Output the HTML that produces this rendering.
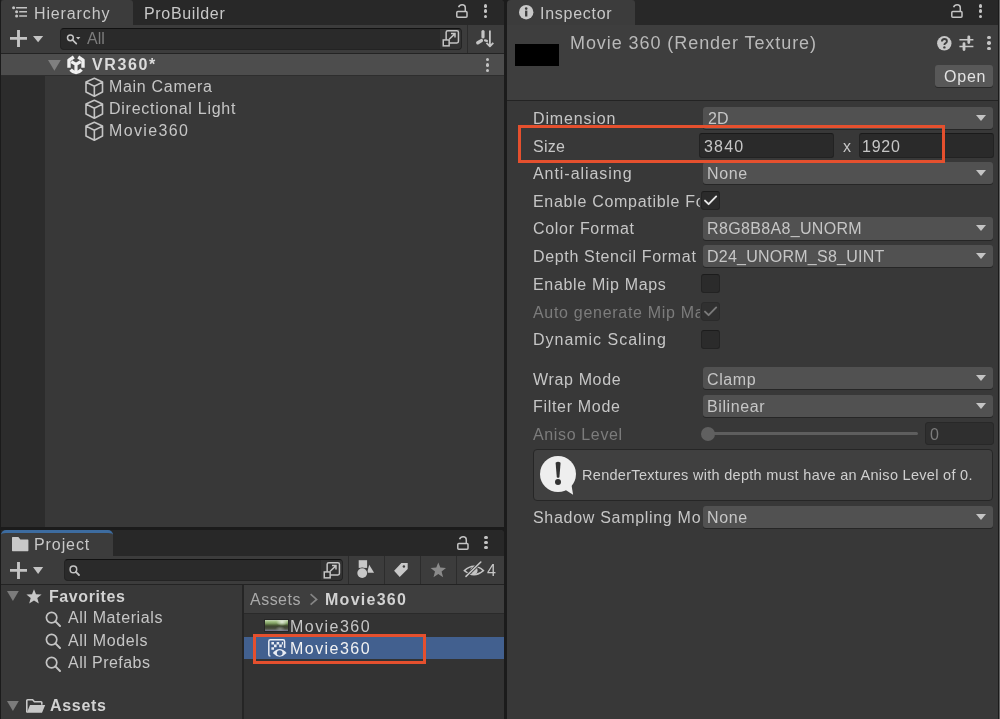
<!DOCTYPE html>
<html><head><meta charset="utf-8">
<style>
*{margin:0;padding:0;box-sizing:border-box}
html,body{width:1000px;height:719px;overflow:hidden;background:#1b1b1b;font-family:"Liberation Sans",sans-serif;-webkit-font-smoothing:antialiased}
.a{position:absolute}
.t{position:absolute;will-change:transform;margin-top:0.7px;white-space:nowrap;font-size:16px;line-height:20px;color:#c6c6c6;letter-spacing:0.7px}
.b{font-weight:700}
.dd{position:absolute;background:#515151;border-radius:3px;box-shadow:0 1px 0 #262626}
.tf{position:absolute;background:#2a2a2a;border-radius:3px;border:1px solid #222;border-top-color:#1a1a1a}
.cb{position:absolute;width:19px;height:19px;background:#2b2b2b;border-radius:3px;border:1px solid #232323;border-top-color:#1c1c1c}
.arr{position:absolute;width:0;height:0;border-left:5.5px solid transparent;border-right:5.5px solid transparent;border-top:6.5px solid #c4c4c4}
.dot{position:absolute;width:3.6px;height:3.6px;border-radius:50%;background:#c4c4c4}
svg{position:absolute;overflow:visible}
</style></head><body>

<!-- ============ HIERARCHY ============ -->
<div class="a" style="left:1px;top:0;width:503px;height:527px;background:#383838;border-top-right-radius:4px;overflow:hidden">
  <div class="a" style="left:0;top:0;width:503px;height:24.5px;background:#282828"></div>
  <div class="a" style="left:0;top:0;width:132.3px;height:24.5px;background:#3c3c3c;border-top-left-radius:3px;border-top-right-radius:3px"></div>
  <div class="a" style="left:0;top:24.5px;width:503px;height:28.5px;background:#3c3c3c"></div>
  <div class="a" style="left:0;top:53px;width:503px;height:1px;background:#232323"></div>
  <div class="a" style="left:466px;top:24.5px;width:1px;height:28.5px;background:#2c2c2c"></div>
  <div class="a" style="left:0;top:54px;width:503px;height:21px;background:#4d4d4d"></div>
  <div class="a" style="left:0;top:75px;width:503px;height:1px;background:#2e2e2e"></div>
  <div class="a" style="left:0;top:76px;width:44px;height:451px;background:#2c2c2c"></div>
</div>

<!-- ============ PROJECT ============ -->
<div class="a" style="left:1px;top:530px;width:503px;height:189px;background:#383838;border-top-right-radius:4px;overflow:hidden">
  <div class="a" style="left:0;top:0;width:503px;height:25.5px;background:#282828"></div>
  <div class="a" style="left:0;top:0;width:112.4px;height:25.5px;background:#3c3c3c;border-top-left-radius:5px;border-top-right-radius:5px;border-top:3px solid #3d6ca0"></div>
  <div class="a" style="left:0;top:25.5px;width:503px;height:28px;background:#3c3c3c"></div>
  <div class="a" style="left:0;top:53.5px;width:503px;height:1px;background:#232323"></div>
  <div class="a" style="left:241px;top:54.5px;width:1.6px;height:140px;background:#252525"></div>
  <div class="a" style="left:242.6px;top:54.5px;width:261px;height:28.5px;background:#3e3e3e"></div>
  <div class="a" style="left:242.6px;top:83px;width:261px;height:1px;background:#2a2a2a"></div>
  <div class="a" style="left:242.6px;top:84px;width:261px;height:110px;background:#333333"></div>
  <div class="a" style="left:242.6px;top:107px;width:261px;height:22px;background:#42608f"></div>
  <div class="a" style="left:347px;top:25.5px;width:1px;height:28px;background:#2c2c2c"></div>
  <div class="a" style="left:383px;top:25.5px;width:1px;height:28px;background:#2c2c2c"></div>
  <div class="a" style="left:419px;top:25.5px;width:1px;height:28px;background:#2c2c2c"></div>
  <div class="a" style="left:455px;top:25.5px;width:1px;height:28px;background:#2c2c2c"></div>
</div>

<!-- ============ INSPECTOR ============ -->
<div class="a" style="left:998.6px;top:0;width:1.4px;height:719px;background:#626262"></div>
<div class="a" style="left:507px;top:0;width:490.6px;height:719px;background:#383838;border-top-left-radius:4px;overflow:hidden">
  <div class="a" style="left:0;top:0;width:491px;height:24.5px;background:#282828"></div>
  <div class="a" style="left:0;top:0;width:128.3px;height:24.5px;background:#3c3c3c;border-top-left-radius:3px;border-top-right-radius:3px"></div>
  <div class="a" style="left:0;top:24.5px;width:491px;height:75.5px;background:#3e3e3e"></div>
  <div class="a" style="left:0;top:100px;width:491px;height:1px;background:#232323"></div>
</div>


<svg style="left:11px;top:5px" width="17" height="13" viewBox="0 0 17 13"><circle cx="2.6" cy="2.7" r="1.5" fill="#c4c4c4"/><circle cx="5.6" cy="6.8" r="1.5" fill="#c4c4c4"/><circle cx="5.6" cy="11" r="1.5" fill="#c4c4c4"/><path d="M5.1 2.7 H16 M8.2 6.8 H16 M8.2 11 H16" stroke="#c4c4c4" stroke-width="1.5"/></svg>
<div class="t" style="left:33.8px;top:3.4px;letter-spacing:0.87px;color:#c8c8c8">Hierarchy</div>
<div class="t" style="left:144.2px;top:3.4px;letter-spacing:0.67px;color:#c8c8c8">ProBuilder</div>
<svg style="left:456.3px;top:4px" width="12" height="14" viewBox="0 0 12 14"><rect x="0.8" y="7.6" width="10.2" height="5.6" rx="1" fill="none" stroke="#c4c4c4" stroke-width="1.5"/><path d="M2.6 3.2 Q3.6 0.8 6.1 0.8 Q9.3 0.8 9.3 3.8 V7.6" fill="none" stroke="#c4c4c4" stroke-width="1.5"/></svg>
<div class="dot" style="left:483.9px;top:4.0px;width:3.6px;height:3.6px"></div><div class="dot" style="left:483.9px;top:9.3px;width:3.6px;height:3.6px"></div><div class="dot" style="left:483.9px;top:14.6px;width:3.6px;height:3.6px"></div>
<svg style="left:10px;top:30.2px" width="17" height="17" viewBox="0 0 17 17"><path d="M0 8.4 H17 M8.5 0 V17" stroke="#c4c4c4" stroke-width="2.9"/></svg>
<svg style="left:33px;top:35.9px" width="10.2" height="6.2" viewBox="0 0 10.2 6.2"><path d="M0 0 H10.2 L5.1 6.2 Z" fill="#c4c4c4"/></svg>
<div class="a" style="left:60px;top:28px;width:402px;height:21.5px;background:#2a2a2a;border-radius:4px;border:1px solid #232323;border-top-color:#111111"></div>
<div class="a" style="left:439.6px;top:29px;width:21.4px;height:19.5px;background:#323232;border-radius:0 3px 3px 0"></div>
<svg style="left:66px;top:32px" width="16" height="14" viewBox="0 0 16 14"><circle cx="4.4" cy="5.8" r="2.9" fill="none" stroke="#c4c4c4" stroke-width="1.5"/><path d="M6.5 7.9 L10.3 11.6" stroke="#c4c4c4" stroke-width="1.7" stroke-linecap="round"/><path d="M10 5 H14.4 L12.2 7.6 Z" fill="#c4c4c4"/></svg>
<div class="t" style="left:87px;top:28.6px;letter-spacing:0px;color:#7d7d7d">All</div>
<svg style="left:441.9px;top:29.3px" width="18" height="17" viewBox="0 0 18 17"><rect x="4.15" y="1.75" width="12.3" height="12.2" rx="1.6" fill="none" stroke="#c4c4c4" stroke-width="1.5"/><rect x="1.25" y="10.95" width="5.9" height="5.9" fill="#2e2e2e" stroke="#c4c4c4" stroke-width="1.5"/><path d="M7.2 10.2 L13 4.6 M9 4.6 H13 V8.6" fill="none" stroke="#c4c4c4" stroke-width="1.5"/></svg>
<svg style="left:474px;top:28px" width="22" height="20" viewBox="0 0 22 20"><path d="M9 3.6 V9" stroke="#c4c4c4" stroke-width="3.2" stroke-linecap="round"/><path d="M3.8 14.8 L7.4 12.6" stroke="#c4c4c4" stroke-width="3.4" stroke-linecap="round"/><path d="M11 12.4 L12.9 12.9" stroke="#c4c4c4" stroke-width="2.2" stroke-linecap="round"/><path d="M15.9 2.6 V18 M12.5 14.8 L15.9 18.4 L19.3 14.8" fill="none" stroke="#c4c4c4" stroke-width="1.8" stroke-linejoin="round"/></svg>
<svg style="left:47.6px;top:60px" width="12.8" height="10.8" viewBox="0 0 12.8 10.8"><path d="M0 0 H12.8 L6.4 10.8 Z" fill="#808080"/></svg>
<svg style="left:66.5px;top:55px" width="18" height="20" viewBox="0 0 18 20"><path d="M2 12.8 V5.2 L6.8 2 M11.2 2 L16 5.2 V12.8" fill="none" stroke="#f0f0f0" stroke-width="3.4" stroke-linejoin="round"/><path d="M4.3 6.7 L9 9.4 L13.7 6.7 M9 9.4 V16" fill="none" stroke="#f0f0f0" stroke-width="3.2"/><path d="M3.6 14.6 Q9 20.6 14.6 14.6" fill="none" stroke="#f0f0f0" stroke-width="3.4"/></svg>
<div class="t b" style="left:91.5px;top:54.4px;letter-spacing:1.62px;color:#dcdcdc">VR360*</div>
<div class="dot" style="left:485.5px;top:57.7px;width:3.2px;height:3.2px"></div><div class="dot" style="left:485.5px;top:63.4px;width:3.2px;height:3.2px"></div><div class="dot" style="left:485.5px;top:69.1px;width:3.2px;height:3.2px"></div>
<svg style="left:82px;top:75.0px" width="24" height="24" viewBox="0 0 24 24"><path d="M12.35 3.3 L20.5 7.1 V17 L12.35 21.2 L4 17 V7.1 Z M4 7.1 L12.35 11.3 L20.5 7.1 M12.35 11.3 V21.2" fill="none" stroke="#c4c4c4" stroke-width="1.6" stroke-linejoin="round"/></svg>
<div class="t" style="left:108.75px;top:76.80px;letter-spacing:0.69px">Main Camera</div>
<svg style="left:82px;top:96.95px" width="24" height="24" viewBox="0 0 24 24"><path d="M12.35 3.3 L20.5 7.1 V17 L12.35 21.2 L4 17 V7.1 Z M4 7.1 L12.35 11.3 L20.5 7.1 M12.35 11.3 V21.2" fill="none" stroke="#c4c4c4" stroke-width="1.6" stroke-linejoin="round"/></svg>
<div class="t" style="left:108.75px;top:98.75px;letter-spacing:0.73px">Directional Light</div>
<svg style="left:82px;top:118.9px" width="24" height="24" viewBox="0 0 24 24"><path d="M12.35 3.3 L20.5 7.1 V17 L12.35 21.2 L4 17 V7.1 Z M4 7.1 L12.35 11.3 L20.5 7.1 M12.35 11.3 V21.2" fill="none" stroke="#c4c4c4" stroke-width="1.6" stroke-linejoin="round"/></svg>
<div class="t" style="left:108.75px;top:120.70px;letter-spacing:1.36px">Movie360</div>
<svg style="left:12px;top:536.6px" width="17" height="15" viewBox="0 0 17 15"><path d="M0 0.6 Q0 0 0.6 0 H6.4 L8.4 2.6 H15.8 Q16.4 2.6 16.4 3.2 V13.6 Q16.4 14.2 15.8 14.2 H0.6 Q0 14.2 0 13.6 Z" fill="#c8c8c8"/></svg>
<div class="t" style="left:33.6px;top:534.7px;letter-spacing:0.91px;color:#c8c8c8">Project</div>
<svg style="left:456.8px;top:535.6px" width="12" height="14" viewBox="0 0 12 14"><rect x="0.8" y="7.6" width="10.2" height="5.6" rx="1" fill="none" stroke="#c4c4c4" stroke-width="1.5"/><path d="M2.6 3.2 Q3.6 0.8 6.1 0.8 Q9.3 0.8 9.3 3.8 V7.6" fill="none" stroke="#c4c4c4" stroke-width="1.5"/></svg>
<div class="dot" style="left:484.3px;top:535.7px;width:3.4px;height:3.4px"></div><div class="dot" style="left:484.3px;top:540.9px;width:3.4px;height:3.4px"></div><div class="dot" style="left:484.3px;top:545.9px;width:3.4px;height:3.4px"></div>
<svg style="left:10.2px;top:561.6px" width="17" height="17" viewBox="0 0 17 17"><path d="M0 8.4 H17 M8.5 0 V17" stroke="#c4c4c4" stroke-width="2.9"/></svg>
<svg style="left:33px;top:566.8px" width="10.2" height="7" viewBox="0 0 10.2 7"><path d="M0 0 H10.2 L5.1 7 Z" fill="#c4c4c4"/></svg>
<div class="a" style="left:63.6px;top:559px;width:279.4px;height:21.8px;background:#2a2a2a;border-radius:4px;border:1px solid #232323;border-top-color:#111111"></div>
<div class="a" style="left:321px;top:560px;width:21px;height:19.8px;background:#323232;border-radius:0 3px 3px 0"></div>
<svg style="left:69px;top:565.4px" width="12" height="11" viewBox="0 0 12 11"><circle cx="4.4" cy="4.4" r="3.3" fill="none" stroke="#c4c4c4" stroke-width="1.5"/><path d="M6.8 6.8 L10 10" stroke="#c4c4c4" stroke-width="1.8" stroke-linecap="round"/></svg>
<svg style="left:322.8px;top:560.6px" width="18" height="17" viewBox="0 0 18 17"><rect x="4.15" y="1.75" width="12.3" height="12.2" rx="1.6" fill="none" stroke="#c4c4c4" stroke-width="1.5"/><rect x="1.25" y="10.95" width="5.9" height="5.9" fill="#2e2e2e" stroke="#c4c4c4" stroke-width="1.5"/><path d="M7.2 10.2 L13 4.6 M9 4.6 H13 V8.6" fill="none" stroke="#c4c4c4" stroke-width="1.5"/></svg>
<svg style="left:356px;top:559px" width="20" height="21" viewBox="0 0 20 21"><rect x="2.7" y="1.2" width="8.4" height="7.7" fill="#c8c8c8"/><path d="M13.2 5.7 L18.1 13.8 H11.1 Z" fill="#c8c8c8"/><circle cx="6.2" cy="14.1" r="5.6" fill="#3c3c3c"/><circle cx="6.2" cy="14.1" r="4.9" fill="#c8c8c8"/></svg>
<svg style="left:393px;top:562px" width="16" height="16" viewBox="0 0 16 16"><path d="M1.1 8.7 L8.4 1 H14.7 V7 L6.7 14.9 Z" fill="#c8c8c8"/><circle cx="10.9" cy="4.5" r="1.2" fill="#3c3c3c"/></svg>
<svg style="left:429.6px;top:561.6px" width="17" height="16" viewBox="0 0 17 16"><path d="M8.3 0.4 L10.3 5.6 L16 5.9 L11.6 9.5 L13.1 15.2 L8.3 12 L3.5 15.2 L5 9.5 L0.6 5.9 L6.3 5.6 Z" fill="#8a8a8a"/></svg>
<svg style="left:463px;top:561px" width="22" height="17" viewBox="0 0 22 17"><path d="M1.4 9.6 Q11 0.8 20.4 9.6 Q11 17.6 1.4 9.6 Z" fill="none" stroke="#c4c4c4" stroke-width="1.5"/><circle cx="11" cy="9.4" r="3.6" fill="#c4c4c4"/><path d="M3 15.4 L17.8 1" stroke="#3c3c3c" stroke-width="3.2"/><path d="M3 15.4 L17.8 1" stroke="#c4c4c4" stroke-width="1.6" stroke-linecap="round"/></svg>
<div class="t" style="left:487px;top:560.8px;letter-spacing:0px">4</div>
<svg style="left:7px;top:591.2px" width="11.8" height="10" viewBox="0 0 11.8 10"><path d="M0 0 H11.8 L5.9 10 Z" fill="#7c7c7c"/></svg>
<svg style="left:26px;top:588.5px" width="16" height="15" viewBox="0 0 16 15"><path d="M8 0.3 L10 5.3 L15.6 5.6 L11.3 9.1 L12.8 14.6 L8 11.5 L3.2 14.6 L4.7 9.1 L0.4 5.6 L6 5.3 Z" fill="#c8c8c8"/></svg>
<div class="t b" style="left:48.5px;top:586px;letter-spacing:0.59px;color:#d2d2d2">Favorites</div>
<svg style="left:45px;top:611.0px" width="17" height="16" viewBox="0 0 17 16"><circle cx="6.6" cy="6.6" r="5.2" fill="none" stroke="#c4c4c4" stroke-width="1.7"/><path d="M10.4 10.4 L15 15" stroke="#c4c4c4" stroke-width="2" stroke-linecap="round"/></svg>
<div class="t" style="left:68px;top:607.70px;letter-spacing:0.61px">All Materials</div>
<svg style="left:45px;top:633.25px" width="17" height="16" viewBox="0 0 17 16"><circle cx="6.6" cy="6.6" r="5.2" fill="none" stroke="#c4c4c4" stroke-width="1.7"/><path d="M10.4 10.4 L15 15" stroke="#c4c4c4" stroke-width="2" stroke-linecap="round"/></svg>
<div class="t" style="left:68px;top:629.95px;letter-spacing:0.63px">All Models</div>
<svg style="left:45px;top:655.5px" width="17" height="16" viewBox="0 0 17 16"><circle cx="6.6" cy="6.6" r="5.2" fill="none" stroke="#c4c4c4" stroke-width="1.7"/><path d="M10.4 10.4 L15 15" stroke="#c4c4c4" stroke-width="2" stroke-linecap="round"/></svg>
<div class="t" style="left:68px;top:652.20px;letter-spacing:0.46px">All Prefabs</div>
<svg style="left:7px;top:701px" width="11.8" height="10" viewBox="0 0 11.8 10"><path d="M0 0 H11.8 L5.9 10 Z" fill="#7c7c7c"/></svg>
<svg style="left:25.5px;top:698.5px" width="20" height="15" viewBox="0 0 20 15"><path d="M0.8 13.6 V1.6 Q0.8 0.8 1.6 0.8 H6.6 L8.4 2.8 H15 Q15.8 2.8 15.8 3.6 V5.8" fill="none" stroke="#c8c8c8" stroke-width="1.6"/><path d="M0.8 13.8 L4 6 H19.2 L16 13.8 Z" fill="#c8c8c8"/></svg>
<div class="t b" style="left:50px;top:695.2px;letter-spacing:0.68px;color:#d2d2d2">Assets</div>
<div class="t" style="left:249.6px;top:589.1px;letter-spacing:0.48px;color:#a9a9a9">Assets</div>
<svg style="left:309px;top:593px" width="10" height="13" viewBox="0 0 10 13"><path d="M1.6 1.2 L7.6 6.4 L1.6 11.6" fill="none" stroke="#858585" stroke-width="1.7"/></svg>
<div class="t b" style="left:325px;top:589.1px;letter-spacing:1.27px;color:#d2d2d2">Movie360</div>
<div class="a" style="left:264.3px;top:619px;width:24.4px;height:12.8px;background:#262626"></div><div class="a" style="left:265.1px;top:619.8px;width:22.8px;height:11.1px;background:radial-gradient(ellipse 6px 4px at 74% 18%,rgba(235,240,230,0.85),rgba(235,240,230,0) 100%),radial-gradient(ellipse 5px 3px at 66% 82%,rgba(150,155,150,0.7),rgba(150,155,150,0) 100%),linear-gradient(180deg,#c9dbbd 0%,#a3c185 14%,#7f9f62 30%,#4a5a35 48%,#3b4230 62%,#4b5040 78%,#6b6e70 92%,#72709a 100%)"></div>
<div class="t" style="left:290px;top:616.3px;letter-spacing:1.45px">Movie360</div>
<svg style="left:267.6px;top:639px" width="20" height="19" viewBox="0 0 20 19"><path d="M2.4 17 Q0.8 17 0.8 15.4 V2.4 Q0.8 0.8 2.4 0.8 H15 Q16.6 0.8 16.6 2.4 V9" fill="none" stroke="#e8ecf3" stroke-width="1.5"/><path d="M3.4 3 H6 V5.6 H3.4 Z M8.6 3 H11.2 V5.6 H8.6 Z M13.8 3 H15 V5.6 H13.8 Z M6 5.6 H8.6 V8.2 H6 Z M11.2 5.6 H13.8 V8.2 H11.2 Z M3.4 8.2 H6 V10.8 H3.4 Z" fill="#e8ecf3"/><path d="M4.8 14 Q11.6 6.2 18.6 14 Q11.6 21.4 4.8 14 Z" fill="#e8ecf3"/><circle cx="11.7" cy="14" r="2.8" fill="#42608f"/></svg>
<div class="t" style="left:290px;top:638.3px;letter-spacing:1.45px;color:#f2f2f2">Movie360</div>
<div class="a" style="left:253px;top:633.6px;width:172.6px;height:30.8px;border:3px solid #e5502e"></div>
<svg style="left:951.1px;top:4.2px" width="12" height="14" viewBox="0 0 12 14"><rect x="0.8" y="7.6" width="10.2" height="5.6" rx="1" fill="none" stroke="#c4c4c4" stroke-width="1.5"/><path d="M2.6 3.2 Q3.6 0.8 6.1 0.8 Q9.3 0.8 9.3 3.8 V7.6" fill="none" stroke="#c4c4c4" stroke-width="1.5"/></svg>
<div class="dot" style="left:978.5px;top:4.0px;width:3.8px;height:3.8px"></div><div class="dot" style="left:978.5px;top:9.3px;width:3.8px;height:3.8px"></div><div class="dot" style="left:978.5px;top:14.5px;width:3.8px;height:3.8px"></div>
<svg style="left:937.2px;top:36px" width="15" height="15" viewBox="0 0 15 15"><circle cx="7.3" cy="7.3" r="7.2" fill="#c8c8c8"/><path d="M4.9 5.6 Q4.9 3 7.4 3 Q9.9 3 9.9 5.3 Q9.9 6.7 8.3 7.4 Q7.4 7.8 7.4 9" fill="none" stroke="#3e3e3e" stroke-width="1.9"/><circle cx="7.4" cy="11.4" r="1.2" fill="#3e3e3e"/></svg>
<svg style="left:959.4px;top:35.9px" width="15" height="15" viewBox="0 0 15 15"><path d="M0.4 3.8 H14.4 M0.4 10.4 H14.4" stroke="#c8c8c8" stroke-width="1.5"/><path d="M9.8 0.8 V6.6 M5 7.6 V13.6" stroke="#c8c8c8" stroke-width="2.8" stroke-linecap="round"/><path d="M8.2 3.8 H11.4 M3.4 10.4 H6.6" stroke="#3e3e3e" stroke-width="0"/></svg>
<div class="dot" style="left:987.1px;top:35.6px;width:3.6px;height:3.6px"></div><div class="dot" style="left:987.1px;top:41.0px;width:3.6px;height:3.6px"></div><div class="dot" style="left:987.1px;top:46.5px;width:3.6px;height:3.6px"></div>
<!-- inspector header content -->
<svg style="left:518.9px;top:5.3px" width="14.4" height="14.4" viewBox="0 0 14.4 14.4"><circle cx="7.2" cy="7.2" r="7.2" fill="#c8c8c8"/><circle cx="7.2" cy="3.6" r="1.3" fill="#3c3c3c"/><rect x="6.05" y="5.6" width="2.3" height="5.9" fill="#3c3c3c"/></svg>
<div class="t" style="left:539.5px;top:3.4px;letter-spacing:0.73px;color:#c8c8c8">Inspector</div>
<div class="a" style="left:515px;top:44.2px;width:44.3px;height:22.1px;background:#000"></div>
<div class="t" style="left:569.8px;top:31.4px;font-size:18px;line-height:22px;letter-spacing:0.93px;color:#b9b9b9">Movie 360 (Render Texture)</div>
<div class="a" style="left:934.8px;top:65px;width:58.3px;height:21.5px;background:#585858;border-radius:3px;box-shadow:0 1px 0 #2a2a2a"></div>
<div class="t" style="left:943.6px;top:66.3px;letter-spacing:0.79px;color:#e2e2e2">Open</div>

<!-- labels -->
<div class="t" style="left:532.6px;top:108.6px;letter-spacing:0.85px">Dimension</div>
<div class="t" style="left:532.6px;top:136.1px;letter-spacing:0.26px">Size</div>
<div class="t" style="left:532.6px;top:163.5px;letter-spacing:0.95px">Anti-aliasing</div>
<div class="t" style="left:532.6px;top:191.1px;letter-spacing:0.7px;width:167px;overflow:hidden">Enable Compatible Format</div>
<div class="t" style="left:532.6px;top:218.7px;letter-spacing:0.7px">Color Format</div>
<div class="t" style="left:532.6px;top:246.7px;letter-spacing:0.66px">Depth Stencil Format</div>
<div class="t" style="left:532.6px;top:274.2px;letter-spacing:0.66px">Enable Mip Maps</div>
<div class="t" style="left:532.6px;top:301.9px;letter-spacing:0.7px;width:167px;overflow:hidden;color:#7c7c7c">Auto generate Mip Maps</div>
<div class="t" style="left:532.6px;top:329.8px;letter-spacing:0.98px">Dynamic Scaling</div>
<div class="t" style="left:532.6px;top:369.0px;letter-spacing:0.65px">Wrap Mode</div>
<div class="t" style="left:532.6px;top:396.5px;letter-spacing:0.69px">Filter Mode</div>
<div class="t" style="left:532.6px;top:424.3px;letter-spacing:0.64px;color:#7c7c7c">Aniso Level</div>
<div class="t" style="left:532.6px;top:507.2px;letter-spacing:0.7px;width:167px;overflow:hidden">Shadow Sampling Mode</div>

<!-- dropdowns -->
<div class="dd" style="left:702.8px;top:106.7px;width:290.7px;height:22.3px"></div>
<div class="dd" style="left:702.8px;top:162.1px;width:290.7px;height:22.3px"></div>
<div class="dd" style="left:702.8px;top:217.4px;width:290.7px;height:22.3px"></div>
<div class="dd" style="left:702.8px;top:245px;width:290.7px;height:22.3px"></div>
<div class="dd" style="left:702.8px;top:366.9px;width:290.7px;height:22.3px"></div>
<div class="dd" style="left:702.8px;top:394.7px;width:290.7px;height:22.3px"></div>
<div class="dd" style="left:702.8px;top:505.8px;width:290.7px;height:22.3px"></div>
<div class="arr" style="left:975.9px;top:114.6px"></div>
<div class="arr" style="left:975.9px;top:170px"></div>
<div class="arr" style="left:975.9px;top:225.3px"></div>
<div class="arr" style="left:975.9px;top:252.9px"></div>
<div class="arr" style="left:975.9px;top:374.8px"></div>
<div class="arr" style="left:975.9px;top:402.6px"></div>
<div class="arr" style="left:975.9px;top:513.7px"></div>
<div class="t" style="left:707.8px;top:108.6px;letter-spacing:0.1px">2D</div>
<div class="t" style="left:706.8px;top:163.5px;letter-spacing:0.6px">None</div>
<div class="t" style="left:706.8px;top:218.7px;letter-spacing:0.34px">R8G8B8A8_UNORM</div>
<div class="t" style="left:706.8px;top:246.7px;letter-spacing:0.24px">D24_UNORM_S8_UINT</div>
<div class="t" style="left:706.8px;top:369.0px;letter-spacing:0.6px">Clamp</div>
<div class="t" style="left:706.8px;top:396.5px;letter-spacing:0.6px">Bilinear</div>
<div class="t" style="left:706.8px;top:507.2px;letter-spacing:0.6px">None</div>

<!-- int fields -->
<div class="tf" style="left:699.4px;top:133.1px;width:135px;height:24.5px"></div>
<div class="tf" style="left:858.7px;top:133.1px;width:135px;height:24.5px"></div>
<div class="t" style="left:704.4px;top:136.1px;letter-spacing:1.2px">3840</div>
<div class="t" style="left:842.5px;top:136.1px;letter-spacing:0px">x</div>
<div class="t" style="left:862.2px;top:136.1px;letter-spacing:0.73px">1920</div>

<!-- checkboxes -->
<div class="cb" style="left:701.4px;top:191.1px"></div>
<div class="cb" style="left:701.4px;top:274.3px"></div>
<div class="cb" style="left:701.4px;top:302px;background:#303030;border-color:#2b2b2b"></div>
<div class="cb" style="left:701.4px;top:329.8px"></div>
<svg style="left:701.4px;top:191.1px" width="19" height="19" viewBox="0 0 19 19"><path d="M4 9.6 L7.6 13.2 L15.2 5.4" fill="none" stroke="#e6e6e6" stroke-width="1.9" stroke-linecap="round" stroke-linejoin="round"/></svg>
<svg style="left:701.4px;top:302px" width="19" height="19" viewBox="0 0 19 19"><path d="M4 9.6 L7.6 13.2 L15.2 5.4" fill="none" stroke="#7a7a7a" stroke-width="1.9" stroke-linecap="round" stroke-linejoin="round"/></svg>

<!-- slider -->
<div class="a" style="left:708px;top:432.1px;width:210px;height:3px;background:#5e5e5e;border-radius:1.5px"></div>
<div class="a" style="left:701.2px;top:426.6px;width:14px;height:14px;background:#606060;border-radius:50%"></div>
<div class="tf" style="left:925.3px;top:421.7px;width:68.4px;height:23.6px;background:#2f2f2f;border-color:#282828"></div>
<div class="t" style="left:929.7px;top:424.3px;color:#7c7c7c">0</div>

<!-- helpbox -->
<div class="a" style="left:532.5px;top:449.4px;width:460.8px;height:51.4px;background:#404040;border:1px solid #262626;border-radius:4px"></div>
<svg style="left:539.8px;top:455.8px" width="36" height="40" viewBox="0 0 36 40"><circle cx="18" cy="18" r="18" fill="#eeeeee"/><path d="M24 33 L33.1 38.8 L31.5 29 Z" fill="#eeeeee"/><path d="M15.6 6.8 Q18 4.6 20.6 6.8 L19.4 21.2 Q18 22.4 16.8 21.2 Z" fill="#333"/><circle cx="18" cy="25.9" r="3" fill="#333"/></svg>
<div class="t" style="left:582.3px;top:465.8px;font-size:14.5px;line-height:18px;letter-spacing:0.3px;color:#cfcfcf">RenderTextures with depth must have an Aniso Level of 0.</div>

<!-- red highlight -->
<div class="a" style="left:518px;top:125.2px;width:427px;height:37.8px;border:3px solid #e5502e"></div>

</body></html>
